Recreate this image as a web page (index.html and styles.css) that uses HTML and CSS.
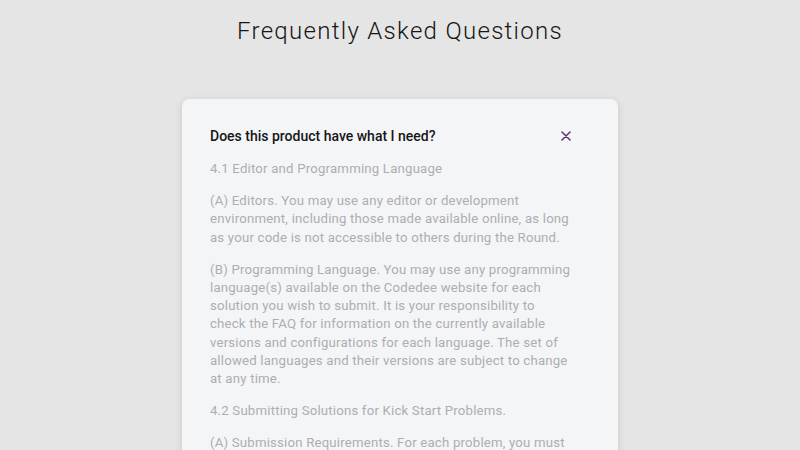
FILE: index.html
```html
<!DOCTYPE html>
<html lang="en">
<head>
    <meta charset="UTF-8">
    <meta name="viewport" content="width=device-width, initial-scale=1.0">
    <title>FAQ</title>
    <link rel="stylesheet" href="styles.css">
</head>
<body>

    <h1 class="page-title">Frequently Asked Questions</h1>

    <div class="faq-card">
        <div class="faq-head">
            <span class="faq-question">Does this product have what I need?</span>
            <span class="close-icon">
                <svg width="10" height="10" viewBox="0 0 10 10">
                    <path d="M1 1 L9 9 M9 1 L1 9" stroke="#5b2f6e" stroke-width="1.5" stroke-linecap="round"/>
                </svg>
            </span>
        </div>
        <p>4.1 Editor and Programming Language</p>
        <p>(A) Editors. You may use any editor or development environment, including those made available online, as long as your code is not accessible to others during the Round.</p>
        <p>(B) Programming Language. You may use any programming language(s) available on the Codedee website for each solution you wish to submit. It is your responsibility to check the FAQ for information on the currently available versions and configurations for each language. The set of allowed languages and their versions are subject to change at any time.</p>
        <p>4.2 Submitting Solutions for Kick Start Problems.</p>
        <p>(A) Submission Requirements. For each problem, you must submit the source code used to produce your output.</p>
    </div>

</body>
</html>
```

FILE: styles.css
```css
body {
    margin: 0;
    background: #e5e5e5;
    font-family: 'Roboto', 'Noto Sans', sans-serif;
    color: #161616;
    height: 450px;
    overflow: hidden;
}
.page-title {
    margin: 0;
    padding-top: 16px;
    font-size: 24px;
    font-weight: 300;
    letter-spacing: 1.3px;
    text-align: center;
    line-height: 30px;
}
.faq-card {
    width: 362.5px;
    margin: 53px auto 0;
    padding: 28px 45.5px 28px 28px;
    background: #f4f5f7;
    border-radius: 8px;
    box-shadow: 0 2px 8px rgba(0, 0, 0, 0.12);
}
.faq-head {
    display: flex;
    justify-content: space-between;
    align-items: center;
}
.faq-question {
    font-size: 14px;
    font-weight: 500;
    line-height: 18px;
}
.close-icon {
    display: flex;
    margin-right: 2px;
}
.faq-card p {
    margin: 14px 0 0;
    font-size: 13.2px;
    letter-spacing: 0.2px;
    line-height: 18.2px;
    color: #acaeb3;
}
.faq-head + p {
    margin-top: 15px;
}
```
